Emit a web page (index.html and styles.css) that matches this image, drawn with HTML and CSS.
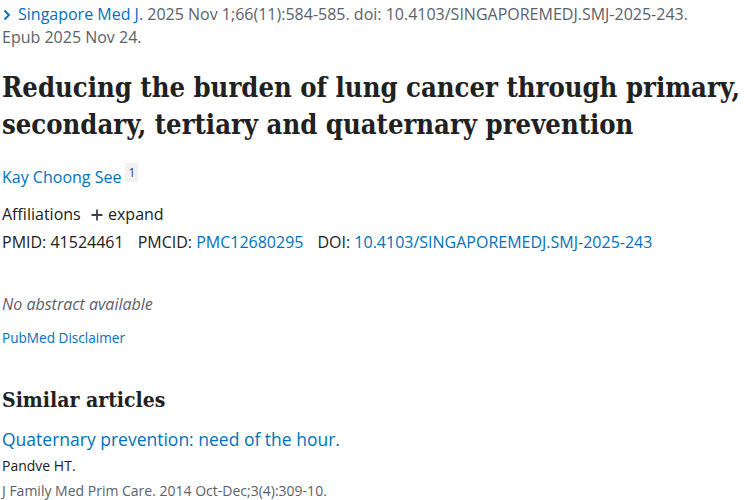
FILE: index.html
```html
<!DOCTYPE html>
<html>
<head>
<meta charset="utf-8">
<link rel="stylesheet" href="styles.css">
</head>
<body>
<main class="page">
  <div class="cite">
    <a class="journal" href="#"><svg class="chev" width="10" height="12" viewBox="0 0 10 12"><path d="M2.5 1.5 L7 6 L2.5 10.5" fill="none" stroke="#0071bc" stroke-width="1.8"/></svg>Singapore Med J.</a> 2025 Nov 1;66(11):584-585. doi: 10.4103/SINGAPOREMEDJ.SMJ-2025-243.<br>Epub 2025 Nov 24.
  </div>
  <h1 class="title">Reducing the burden of lung cancer through primary, secondary, tertiary and quaternary prevention</h1>
  <div class="authors"><a href="#">Kay Choong See</a><sup class="aff-num">1</sup></div>
  <div class="affil">Affiliations <span class="expand"><svg class="plus" width="12" height="12" viewBox="0 0 12 12"><path d="M6 0.5 V11.5 M0.5 6 H11.5" stroke="#3d4551" stroke-width="1.8"/></svg> expand</span></div>
  <div class="ids">
    <span>PMID: 41524461</span>
    <span>PMCID: <a href="#">PMC12680295</a></span>
    <span>DOI: <a href="#">10.4103/SINGAPOREMEDJ.SMJ-2025-243</a></span>
  </div>
  <p class="noabs">No abstract available</p>
  <a class="disclaimer" href="#">PubMed Disclaimer</a>
  <h2 class="similar">Similar articles</h2>
  <a class="sim-title" href="#">Quaternary prevention: need of the hour.</a>
  <div class="sim-auth">Pandve HT.</div>
  <div class="sim-cite">J Family Med Prim Care. 2014 Oct-Dec;3(4):309-10.</div>
</main>
</body>
</html>
```
FILE: styles.css
```css
html, body { margin: 0; padding: 0; background: #fff; }
body { font-family: "Open Sans", "Noto Sans", sans-serif; color: #212121; }
a { color: #0071bc; text-decoration: none; }
.page { padding: 0 2px; }
.cite { font-size: 16px; line-height: 23px; color: #5b616b; padding-top: 3px; }
.chev { margin-right: 6px; vertical-align: -1px; }
.title { font-family: "DejaVu Serif Condensed", "DejaVu Serif", serif; font-stretch: condensed; font-weight: bold; font-size: 27.2px; line-height: 37px; margin: 20px 0 0; color: #212121; }
.authors { margin-top: 23px; font-size: 16px; line-height: 23px; }
.aff-num { font-size: 12px; color: #3d4551; background: #f1f1f1; padding: 1px 3px; margin-left: 4px; vertical-align: 6px; line-height: 1; }
.affil { margin-top: 14px; font-size: 16px; line-height: 23px; }
.expand { margin-left: 6px; }
.plus { vertical-align: -1px; margin-right: 1px; }
.ids { margin-top: 5px; font-size: 16px; line-height: 23px; display: flex; gap: 14px; }
.noabs { margin: 39px 0 0; font-style: italic; color: #5b616b; font-size: 16px; line-height: 23px; }
.disclaimer { display: block; margin-top: 12px; font-size: 13.6px; line-height: 20px; }
.similar { font-family: "DejaVu Serif Condensed", "DejaVu Serif", serif; font-stretch: condensed; font-weight: bold; font-size: 21px; line-height: 30px; margin: 37px 0 0; }
.sim-title { display: block; margin-top: 12px; font-size: 17.5px; line-height: 24px; }
.sim-auth { margin-top: 4px; font-size: 14px; line-height: 22px; color: #212121; }
.sim-cite { margin-top: 3px; font-size: 14px; line-height: 22px; color: #5b616b; }
```
